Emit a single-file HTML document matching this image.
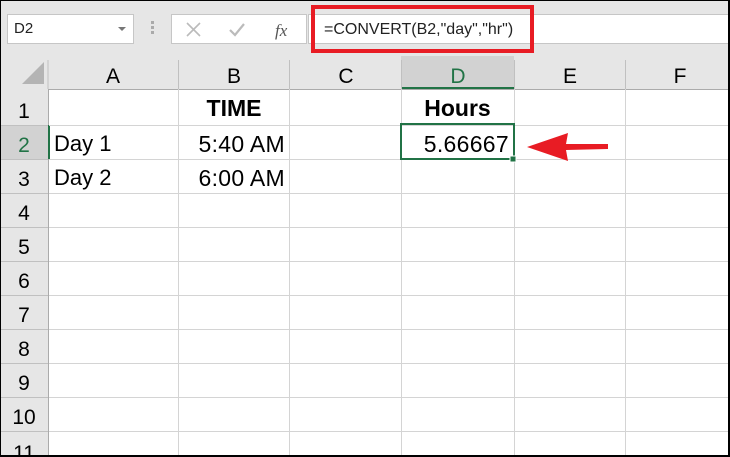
<!DOCTYPE html><html><head><style>
body{margin:0;width:730px;height:457px;overflow:hidden;position:relative;background:#fff;font-family:"Liberation Sans",sans-serif}
.a{position:absolute}
.t{position:absolute;font-size:22px;color:#000;line-height:34px}
.n{font-size:23px;letter-spacing:0.3px}
</style></head><body>
<div class="a" style="left:0;top:0;width:730px;height:56px;background:#e6e6e6"></div>
<div class="a" style="left:7px;top:14px;width:125px;height:28px;background:#fff;border:1px solid #c6c6c6"></div>
<div class="a" style="left:14px;top:20px;font-size:15px;color:#222">D2</div>
<div class="a" style="left:118px;top:27px;width:0;height:0;border-left:4px solid transparent;border-right:4px solid transparent;border-top:4px solid #777"></div>
<div class="a" style="left:151px;top:21px;width:3px;height:3px;background:#aaa;box-shadow:0 5px #aaa,0 10px #aaa"></div>
<div class="a" style="left:171px;top:14px;width:134px;height:28px;background:#fff;border:1px solid #c6c6c6"></div>
<svg class="a" style="left:184px;top:20px" width="120" height="20"><path d="M3 3L16 16M16 3L3 16" stroke="#bbb" stroke-width="1.6"/><path d="M46 10l5 5 9-11" stroke="#bbb" stroke-width="2.2" fill="none"/><text x="91" y="16" font-family="Liberation Serif" font-style="italic" font-size="17" fill="#555">fx</text></svg>
<div class="a" style="left:308px;top:14px;width:420px;height:28px;background:#fff;border:1px solid #c6c6c6;border-right:none"></div>
<div class="a" style="left:311px;top:5px;width:215px;height:40px;border:4px solid #e81c24"></div>
<div class="a" style="left:324px;top:21px;font-size:16px;color:#222">=CONVERT(B2,"day","hr")</div>
<div class="a" style="left:0;top:56px;width:730px;height:33px;background:#e6e6e6;border-bottom:1px solid #ababab"></div>
<div class="a" style="left:0;top:89px;width:48px;height:368px;background:#e6e6e6;border-right:1px solid #ababab"></div>
<div class="a" style="left:401px;top:56px;width:113px;height:31px;background:#d2d2d2;border-bottom:2px solid #217346"></div>
<div class="a" style="left:0;top:125px;width:48px;height:34px;background:#d2d2d2;border-right:2px solid #217346"></div>
<svg class="a" style="left:0;top:56px" width="730" height="401">
<path d="M44 6V28H22Z" fill="#b4b4b4"/>
<g stroke="#d4d4d4" stroke-width="1">
<path d="M178.5 33V401M289.5 33V401M401.5 33V401M514.5 33V401M625.5 33V401"/>
<path d="M49 69.5H730M49 103.5H730M49 137.5H730M49 171.5H730M49 205.5H730M49 239.5H730M49 273.5H730M49 307.5H730M49 341.5H730M49 375.5H730"/>
</g>
<g stroke="#c0c0c0"><path d="M178.5 4V33M289.5 4V33M401.5 4V33M514.5 4V33M625.5 4V33M48 4V33"/>
<path d="M0 69.5H48M0 103.5H48M0 137.5H48M0 171.5H48M0 205.5H48M0 239.5H48M0 273.5H48M0 307.5H48M0 341.5H48M0 375.5H48"/></g>
<g font-family="Liberation Sans" font-size="21" text-anchor="middle" fill="#000">
<text x="113" y="27">A</text><text x="234" y="27">B</text><text x="346" y="27">C</text><text x="458" y="27" fill="#217346">D</text><text x="570" y="27">E</text><text x="680" y="27">F</text>
<text x="24" y="62">1</text><text x="24" y="96" fill="#217346">2</text><text x="24" y="130">3</text><text x="24" y="164">4</text><text x="24" y="198">5</text><text x="24" y="232">6</text><text x="24" y="266">7</text><text x="24" y="300">8</text><text x="24" y="334">9</text><text x="24" y="368">10</text><text x="24" y="404">11</text>
</g>
<rect x="401" y="68" width="113" height="35" fill="none" stroke="#217346" stroke-width="2"/>
<rect x="510" y="100" width="6" height="6" fill="#217346" stroke="#fff"/>
<path d="M527 91L568 77L566 88L608 88L608 93L566 94L568 105Z" fill="#e81c24"/>
</svg>
<div class="t" style="left:54px;top:127px">Day 1</div>
<div class="t" style="left:54px;top:161px">Day 2</div>
<div class="t n" style="left:178px;width:107px;text-align:right;top:127px">5:40 AM</div>
<div class="t n" style="left:178px;width:107px;text-align:right;top:161px">6:00 AM</div>
<div class="t" style="left:178px;width:112px;text-align:center;top:91px;font-weight:bold;font-size:23px">TIME</div>
<div class="t" style="left:401px;width:113px;text-align:center;top:91px;font-weight:bold;font-size:23px">Hours</div>
<div class="t n" style="left:401px;width:108px;text-align:right;top:127px">5.66667</div>
<div class="a" style="left:0;top:0;border:1px solid #000;border-right:2px solid #000;border-bottom:2px solid #000;width:727px;height:454px"></div>
</body></html>
